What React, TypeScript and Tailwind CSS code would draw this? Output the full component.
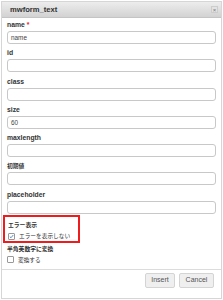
import React from 'react';

const font = { fontFamily: '"Liberation Sans", "Noto Sans CJK JP", sans-serif' };

const Field: React.FC<{ label: string; value?: string; required?: boolean; jp?: boolean }> = ({ label, value, required, jp }) => (
    <div className="flex flex-col">
        <div className={`h-[10px] leading-[10px] font-bold text-[#333] mb-[1px] ${jp ? 'text-[5.8px]' : 'text-[6.8px]'}`}>
            {label}
            {required && <span className="text-[#e0262f] ml-[2px]">*</span>}
        </div>
        <div className="h-[13px] border border-[#c8c8c8] rounded-[3px] bg-white px-[3px] flex items-center text-[6.4px] text-[#444]">
            {value}
        </div>
    </div>
);

const Check: React.FC<{ checked?: boolean; label: string }> = ({ checked, label }) => (
    <div className="flex items-center gap-[4px] h-[10px] whitespace-nowrap">
        <div className="w-[7px] h-[7px] border border-[#999] rounded-[1px] bg-white flex items-center justify-center">
            {checked && (
                <svg width="7" height="7" viewBox="0 0 8 8">
                    <path d="M1.3 4.2 L3.2 6 L6.8 1.6" fill="none" stroke="#3b73b9" strokeWidth="1.3" />
                </svg>
            )}
        </div>
        <span className="text-[5.7px] text-[#333]">{label}</span>
    </div>
);

export default function App() {
    return (
        <div className="w-[223px] h-[300px] bg-white p-[1px]" style={font}>
            <div className="w-full h-full border border-[#d6d6d6] flex flex-col bg-white">
                <div className="h-[16px] flex items-center justify-between pl-[8px] pr-[3px] bg-gradient-to-b from-[#ededed] to-[#d2d2d2] border-b border-[#c4c4c4]">
                    <span className="text-[7.6px] font-bold text-[#333]">mwform_text</span>
                    <div className="w-[7px] h-[7px] bg-[#e2e2e2] border border-[#cdcdcd] flex items-center justify-center text-[6px] leading-none text-[#777]">×</div>
                </div>
                <div className="flex flex-col gap-[4.3px] px-[5px] pt-[2px]">
                    <Field label="name" value="name" required />
                    <Field label="id" />
                    <Field label="class" />
                    <Field label="size" value="60" />
                    <Field label="maxlength" />
                    <Field label="初期値" jp />
                    <Field label="placeholder" />
                </div>
                <div className="mx-[1px] mt-[1px] w-[77px] h-[28px] border-2 border-[#ee1c1c] px-[3px] pt-[3px] flex flex-col gap-[2px]">
                    <div className="h-[10px] leading-[10px] text-[5.8px] font-bold text-[#333]">エラー表示</div>
                    <Check checked label="エラーを表示しない" />
                </div>
                <div className="px-[5px] pt-[1px] flex flex-col gap-[1px]">
                    <div className="h-[10px] leading-[10px] text-[5.8px] font-bold text-[#333]">半角英数字に変換</div>
                    <Check label="変換する" />
                </div>
                <div className="mt-[4px] border-t border-[#dcdcdc]" />
                <div className="flex justify-end gap-[4px] pr-[7px] pt-[3px]">
                    <div className="w-[30px] h-[15px] rounded-[2px] border border-[#d4d4d4] bg-[#efefef] flex items-center justify-center text-[7px] text-[#555]">Insert</div>
                    <div className="w-[35px] h-[15px] rounded-[2px] border border-[#d4d4d4] bg-[#efefef] flex items-center justify-center text-[7px] text-[#555]">Cancel</div>
                </div>
            </div>
        </div>
    );
}
